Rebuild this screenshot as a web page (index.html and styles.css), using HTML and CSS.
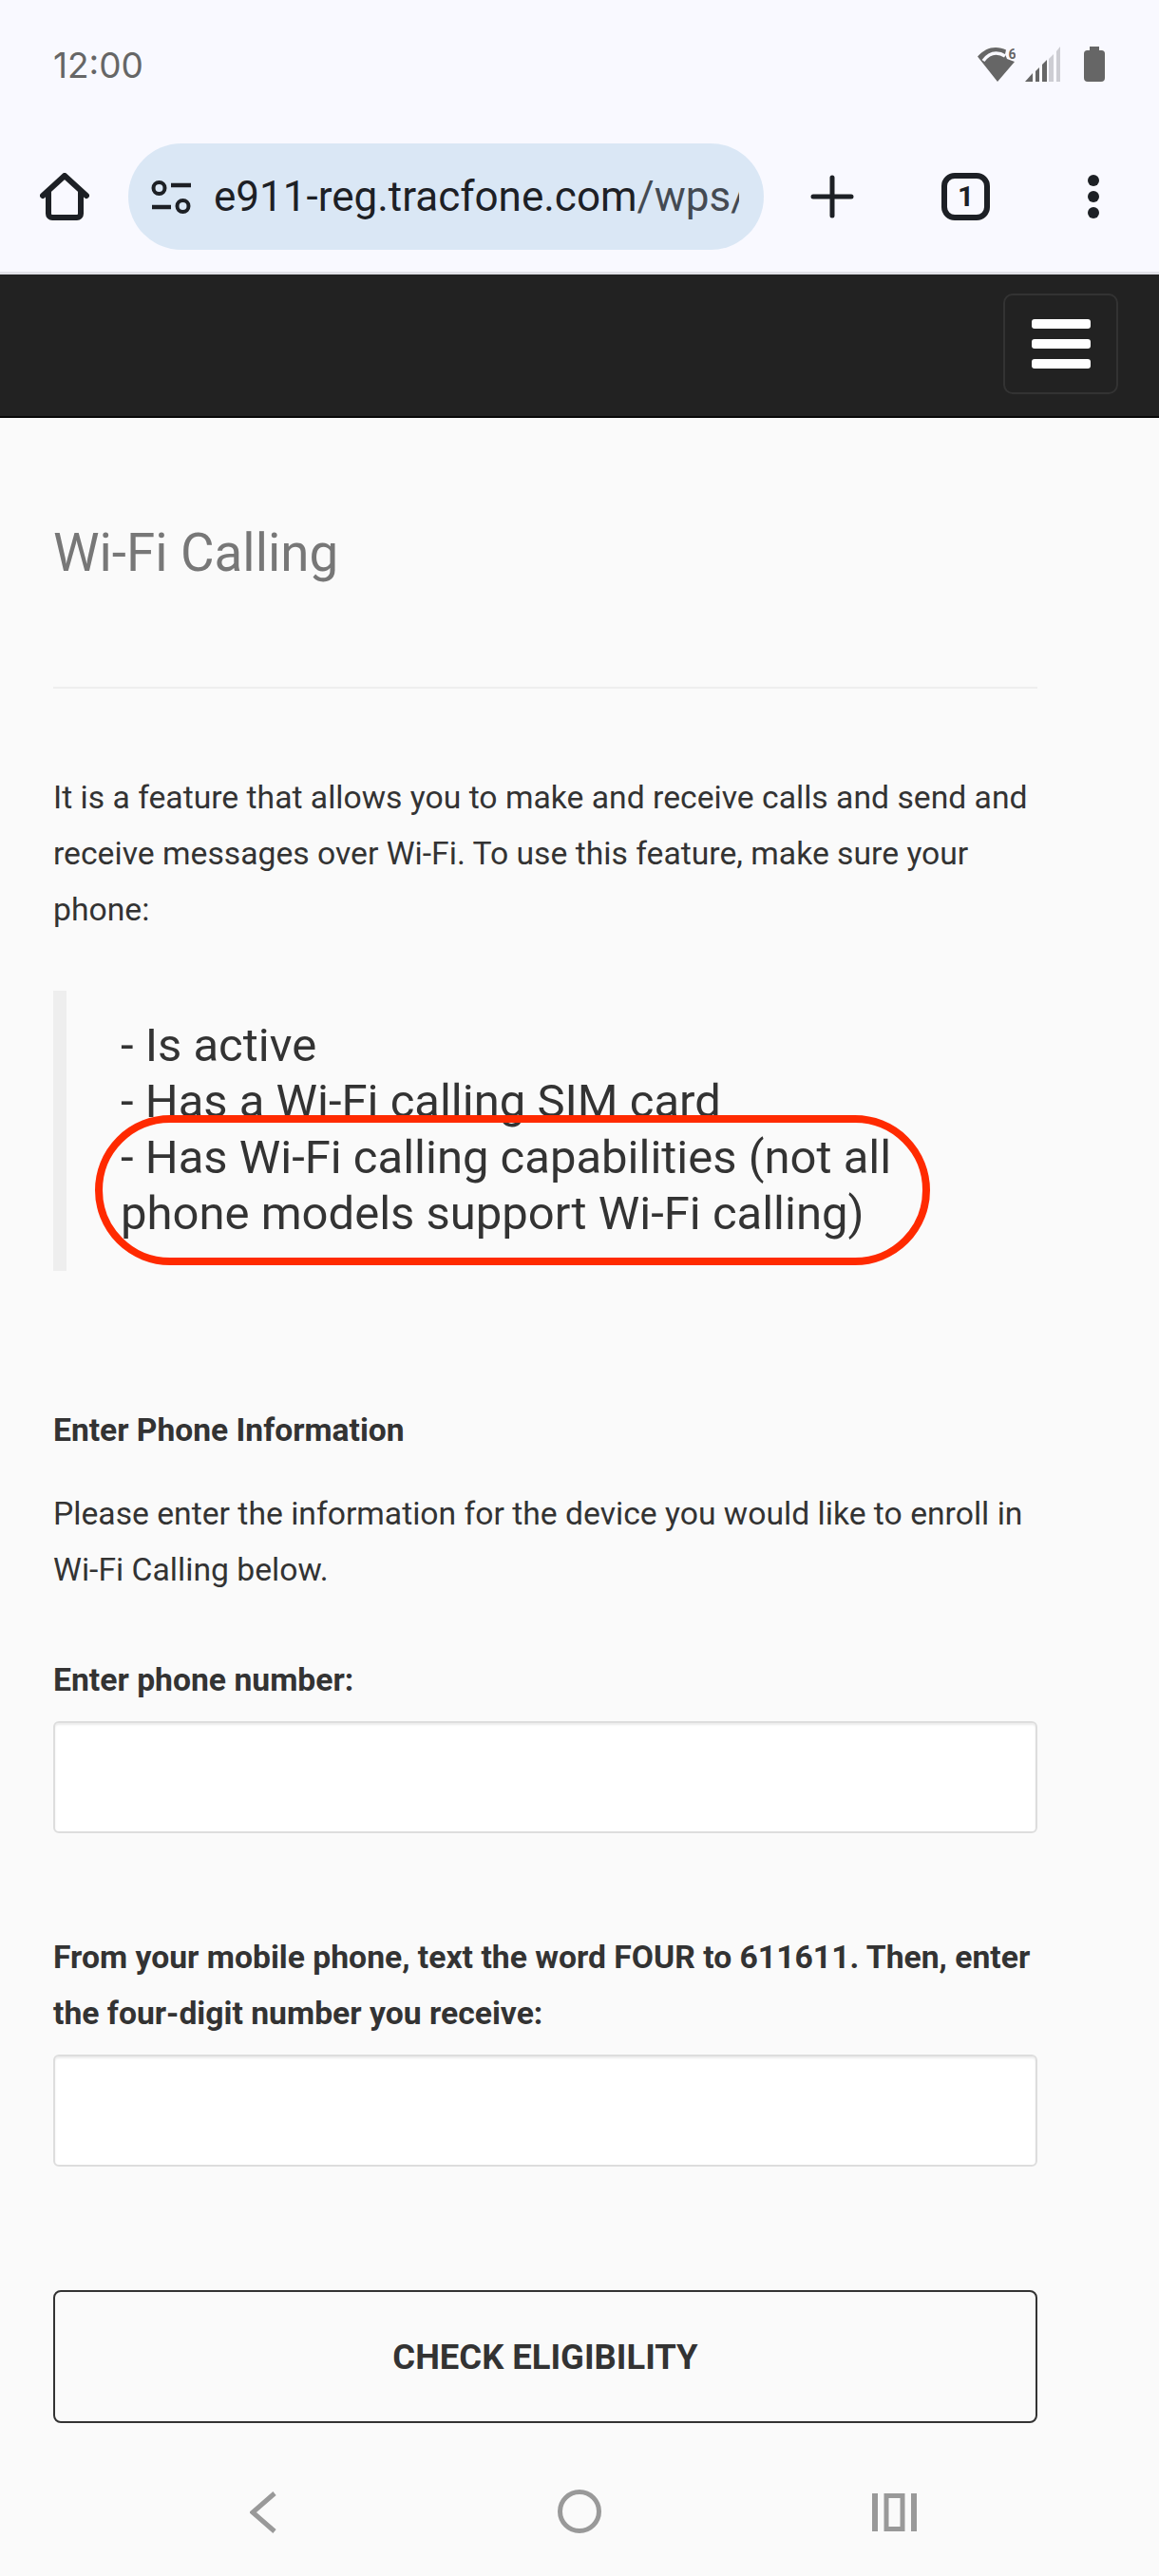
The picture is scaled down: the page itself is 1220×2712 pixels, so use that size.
FILE: index.html
```html
<!DOCTYPE html>
<html lang="en">
<head>
    <meta charset="UTF-8">
    <meta name="viewport" content="width=device-width, initial-scale=1.0">
    <title>Wi-Fi Calling</title>
    <link rel="stylesheet" href="styles.css">
</head>
<body>
    <!-- Status bar -->
    <div class="status-bar">
        <span class="clock">12:00</span>
        <div class="status-icons">
            <svg class="icon-wifi" viewBox="0 0 40 37">
                <path d="M21 36 0 9.500C6 3 12 0 19 0c4 0 8 1 11 2.500L29 7l2 5 8 3z" fill="#666"/>
                <path d="M6 14c4-5.500 9-8 13.500-8 3.500 0 6.500 1 9.500 3" fill="none" stroke="#f9f9ff" stroke-width="3.500"/>
                <text class="wifi-six" x="32.500" y="11.500">6</text>
            </svg>
            <svg class="icon-signal" viewBox="0 0 37 37">
                <path d="M0 37 8 28v9z" fill="#666"/>
                <path d="M11 37V26l4-4v15z" fill="#666"/>
                <path d="M18 37V19l5-5v23z" fill="#666"/>
                <path d="M25 37V13l5-5v29z" fill="#cdcdd3"/>
                <path d="M33 37V5l4-5v37z" fill="#cdcdd3"/>
            </svg>
            <svg class="icon-battery" viewBox="0 0 22 37">
                <path d="M6 0h10v4h2.500A3.500 3.500 0 0 1 22 7.500V33a4 4 0 0 1-4 4H4a4 4 0 0 1-4-4V7.500A3.500 3.500 0 0 1 3.500 4H6z" fill="#666"/>
            </svg>
        </div>
    </div>

    <!-- Browser toolbar -->
    <div class="toolbar">
        <svg class="tool-icon home-icon" viewBox="0 0 52 50">
            <path d="M3 24 26 3l23 21M9 20v23a4 4 0 0 0 4 4h26a4 4 0 0 0 4-4V20" fill="none" stroke="#1d2025" stroke-width="6" stroke-linecap="round" stroke-linejoin="round"/>
        </svg>
        <div class="url-pill">
            <svg class="tune-icon" viewBox="0 0 42 35">
                <circle cx="8.500" cy="8" r="6" fill="none" stroke="#1d2025" stroke-width="4"/>
                <path d="M21 5h21M1 28h20" stroke="#1d2025" stroke-width="4.500" fill="none"/>
                <circle cx="33.500" cy="27" r="6" fill="none" stroke="#1d2025" stroke-width="4"/>
            </svg>
            <div class="url-text">e911-reg.tracfone.com<span class="url-path">/wps/</span></div>
        </div>
        <svg class="tool-icon plus-icon" viewBox="0 0 46 46">
            <path d="M3 23h40M23 3v40" stroke="#1d2025" stroke-width="5" stroke-linecap="round"/>
        </svg>
        <div class="tab-count">1</div>
        <div class="menu-dots"><i></i><i></i><i></i></div>
    </div>

    <!-- Site header -->
    <div class="site-header">
        <div class="nav-toggle"><i></i><i></i><i></i></div>
    </div>

    <!-- Page content -->
    <div class="content">
        <h1>Wi-Fi Calling</h1>
        <hr>
        <p class="text">It is a feature that allows you to make and receive calls and send and receive messages over Wi-Fi. To use this feature, make sure your phone:</p>

        <blockquote>
            - Is active<br>
            - Has a Wi-Fi calling SIM card<br>
            - Has Wi-Fi calling capabilities (not all phone models support Wi-Fi calling)
            <div class="red-circle"></div>
        </blockquote>

        <h4>Enter Phone Information</h4>
        <p class="text intro">Please enter the information for the device you would like to enroll in Wi-Fi Calling below.</p>

        <label class="field-label">Enter phone number:</label>
        <input class="field" type="text">

        <label class="field-label second">From your mobile phone, text the word FOUR to 611611. Then, enter the four-digit number you receive:</label>
        <input class="field" type="text">

        <button class="btn-check">CHECK ELIGIBILITY</button>
    </div>

    <!-- Android navigation -->
    <div class="nav-bar">
        <svg class="nav-back" viewBox="0 0 28 44">
            <path d="M26 2 3 22l23 20" fill="none" stroke="#999" stroke-width="5"/>
        </svg>
        <svg class="nav-home" viewBox="0 0 46 46">
            <circle cx="23" cy="23" r="20.500" fill="none" stroke="#999" stroke-width="5"/>
        </svg>
        <svg class="nav-recent" viewBox="0 0 47 40">
            <path d="M0 0h6v40H0zM41 0h6v40h-6z" fill="#999"/>
            <path d="M15 2.500h17v35H15z" fill="none" stroke="#999" stroke-width="5"/>
        </svg>
    </div>
</body>
</html>
```

FILE: styles.css
```css
/* General */
* {
    box-sizing: border-box;
    margin: 0;
    padding: 0;
}

body {
    width: 1220px;
    height: 2712px;
    overflow: hidden;
    background-color: #fafafa;
    color: #333;
    font-family: 'Roboto', sans-serif;
    display: flex;
    flex-direction: column;
}

/* Status bar */
.status-bar {
    height: 151px;
    flex: none;
    background-color: #f9f9ff;
    display: flex;
    justify-content: space-between;
    align-items: flex-start;
    padding: 49px 57px 0 56px;
}

.clock {
    font-family: 'Inter', sans-serif;
    font-size: 37px;
    line-height: 40px;
    color: #666;
}

.status-icons {
    display: flex;
    gap: 10px;
}

.icon-wifi {
    width: 40px;
    height: 37px;
    margin-top: 1px;
}

.wifi-six {
    font-family: 'Roboto', sans-serif;
    font-size: 14px;
    font-weight: 700;
    fill: #666;
}

.icon-signal {
    width: 37px;
    height: 37px;
    margin-right: 15px;
}

.icon-battery {
    width: 22px;
    height: 37px;
}

/* Toolbar */
.toolbar {
    height: 138px;
    flex: none;
    background-color: #f9f9ff;
    border-bottom: 3px solid #e2e2e8;
    display: flex;
    align-items: flex-start;
    padding-left: 42px;
}

.home-icon {
    width: 52px;
    height: 50px;
    margin-top: 31px;
}

.url-pill {
    width: 669px;
    height: 112px;
    margin-left: 41px;
    background-color: #dae7f5;
    border-radius: 56px;
    display: flex;
    align-items: center;
    padding-left: 24px;
}

.tune-icon {
    width: 42px;
    height: 35px;
    flex: none;
}

.url-text {
    width: 553px;
    margin-left: 24px;
    overflow: hidden;
    white-space: nowrap;
    font-size: 44px;
    line-height: 60px;
    color: #1d2025;
}

.url-path {
    color: #444a52;
}

.plus-icon {
    width: 46px;
    height: 46px;
    margin: 33px 0 0 49px;
}

.tab-count {
    width: 51px;
    height: 50px;
    margin: 31px 0 0 92px;
    border: 6px solid #1d2025;
    border-radius: 14px;
    font-size: 30px;
    font-weight: 700;
    line-height: 38px;
    text-align: center;
    color: #1d2025;
}

.menu-dots {
    margin: 33px 0 0 103px;
    display: flex;
    flex-direction: column;
    gap: 5px;
}

.menu-dots i {
    display: block;
    width: 12px;
    height: 12px;
    border-radius: 50%;
    background-color: #1d2025;
}

/* Site header */
.site-header {
    height: 151px;
    flex: none;
    background-color: #222;
    border-bottom: 2px solid #080808;
    display: flex;
    justify-content: flex-end;
    align-items: flex-start;
    padding: 20px 43px 0 0;
}

.nav-toggle {
    width: 121px;
    height: 106px;
    border: 2px solid #333;
    border-radius: 10px;
    display: flex;
    flex-direction: column;
    align-items: center;
    gap: 11px;
    padding-top: 25px;
}

.nav-toggle i {
    display: block;
    width: 62px;
    height: 10px;
    border-radius: 3px;
    background-color: #fff;
}

/* Content */
.content {
    flex: 1;
    padding: 0 128px 0 56px;
}

h1 {
    margin-top: 109px;
    font-size: 54.700px;
    font-weight: 400;
    line-height: 66px;
    color: #777;
}

hr {
    margin-top: 108px;
    border: none;
    border-top: 2px solid #eee;
}

.text {
    font-size: 33.700px;
    line-height: 59px;
}

hr + .text {
    margin-top: 85px;
}

blockquote {
    position: relative;
    margin-top: 56px;
    padding: 28px 60px 31px 57px;
    border-left: 14px solid #eee;
    font-size: 49px;
    line-height: 59px;
}

.red-circle {
    position: absolute;
    left: 30px;
    top: 131px;
    width: 879px;
    height: 158px;
    border: 8px solid #ff2a00;
    border-radius: 79px / 79px;
}

h4 {
    margin-top: 148px;
    font-size: 33.600px;
    font-weight: 700;
    line-height: 40px;
}

.intro {
    margin-top: 38px;
}

.field-label {
    display: block;
    margin-top: 57px;
    font-size: 33.700px;
    font-weight: 700;
    line-height: 59px;
}

.field-label.second {
    margin-top: 101px;
}

.field {
    display: block;
    width: 100%;
    height: 118px;
    margin-top: 14px;
    border: 2px solid #ddd;
    border-radius: 6px;
    background-color: #fff;
    box-shadow: inset 0 2px 2px rgba(0, 0, 0, 0.075);
}

.btn-check {
    display: block;
    width: 100%;
    height: 140px;
    margin-top: 130px;
    border: 2px solid #333;
    border-radius: 8px;
    background: transparent;
    color: #333;
    font-family: 'Roboto', sans-serif;
    font-size: 36.400px;
    font-weight: 700;
}

/* Android navigation */
.nav-bar {
    height: 0;
    flex: none;
    position: relative;
}

.nav-back {
    position: absolute;
    left: 263px;
    bottom: 45px;
    width: 28px;
    height: 44px;
}

.nav-home {
    position: absolute;
    left: 587px;
    bottom: 45px;
    width: 46px;
    height: 46px;
}

.nav-recent {
    position: absolute;
    left: 918px;
    bottom: 47px;
    width: 47px;
    height: 40px;
}
```
